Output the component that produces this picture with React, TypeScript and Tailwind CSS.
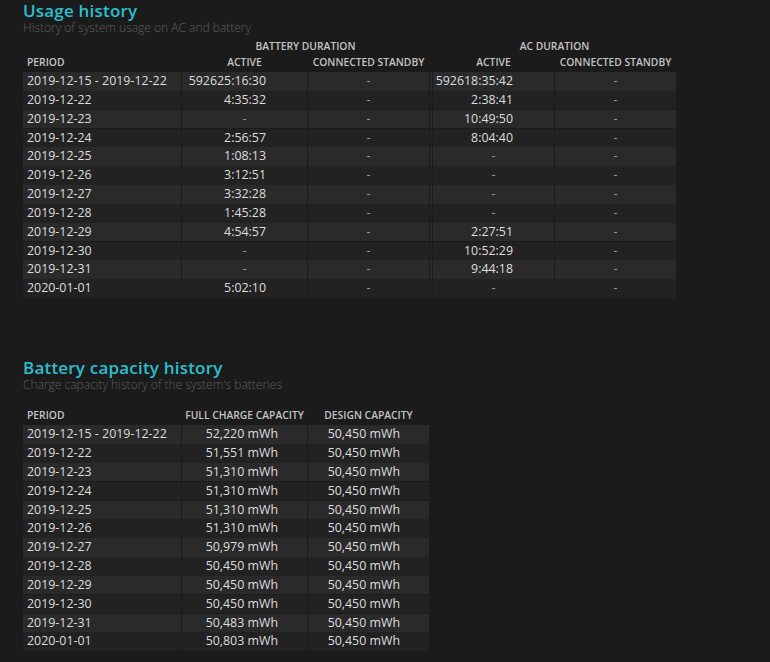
import React from 'react';

type Cell = string;

const usageRows: Cell[][] = [
  ['2019-12-15 - 2019-12-22', '592625:16:30', '-', '592618:35:42', '-'],
  ['2019-12-22', '4:35:32', '-', '2:38:41', '-'],
  ['2019-12-23', '-', '-', '10:49:50', '-'],
  ['2019-12-24', '2:56:57', '-', '8:04:40', '-'],
  ['2019-12-25', '1:08:13', '-', '-', '-'],
  ['2019-12-26', '3:12:51', '-', '-', '-'],
  ['2019-12-27', '3:32:28', '-', '-', '-'],
  ['2019-12-28', '1:45:28', '-', '-', '-'],
  ['2019-12-29', '4:54:57', '-', '2:27:51', '-'],
  ['2019-12-30', '-', '-', '10:52:29', '-'],
  ['2019-12-31', '-', '-', '9:44:18', '-'],
  ['2020-01-01', '5:02:10', '-', '-', '-'],
];

const capacityRows: Cell[][] = [
  ['2019-12-15 - 2019-12-22', '52,220 mWh', '50,450 mWh'],
  ['2019-12-22', '51,551 mWh', '50,450 mWh'],
  ['2019-12-23', '51,310 mWh', '50,450 mWh'],
  ['2019-12-24', '51,310 mWh', '50,450 mWh'],
  ['2019-12-25', '51,310 mWh', '50,450 mWh'],
  ['2019-12-26', '51,310 mWh', '50,450 mWh'],
  ['2019-12-27', '50,979 mWh', '50,450 mWh'],
  ['2019-12-28', '50,450 mWh', '50,450 mWh'],
  ['2019-12-29', '50,450 mWh', '50,450 mWh'],
  ['2019-12-30', '50,450 mWh', '50,450 mWh'],
  ['2019-12-31', '50,483 mWh', '50,450 mWh'],
  ['2020-01-01', '50,803 mWh', '50,450 mWh'],
];

// right aligned durations, centered dashes
function Value({ v, pad, bg }: { v: string; pad: 'hms' | 'mw'; bg: string }) {
  if (v === '-') {
    return <div className={`${bg} flex items-center justify-center text-[#9a9a9a]`}>-</div>;
  }
  return (
    <div className={`${bg} flex items-center justify-end ${pad === 'hms' ? 'pr-[41px]' : 'pr-[29px]'}`}>
      {v}
    </div>
  );
}

function SectionTitle({ title, sub }: { title: string; sub: string }) {
  return (
    <div>
      <h1 className="text-[17px] leading-[20px] font-semibold text-[#2bbfcf] tracking-[0.2px]">{title}</h1>
      <p className="text-[12px] leading-[13px] font-light text-[#5e5e5e]">{sub}</p>
    </div>
  );
}

export default function App() {
  return (
    <div
      className="min-h-screen bg-[#1b1b1b] pl-[23px] pt-px text-[#dedede]"
      style={{ fontFamily: '"Open Sans", "Noto Sans", sans-serif' }}
    >
      {/* Usage history */}
      <SectionTitle title="Usage history" sub="History of system usage on AC and battery" />

      <div className="mt-[5px] w-[653px] text-[10.3px] font-semibold text-[#c4c4c4]">
        <div className="grid grid-cols-[158px_125px_121px_2px_121px_121px] gap-x-px h-[16px] items-center">
          <div />
          <div className="col-span-2 text-center">BATTERY DURATION</div>
          <div />
          <div className="col-span-2 text-center">AC DURATION</div>
        </div>
        <div className="grid grid-cols-[158px_125px_121px_2px_121px_121px] gap-x-px h-[16px] items-center">
          <div className="pl-[4px]">PERIOD</div>
          <div className="text-center">ACTIVE</div>
          <div className="text-center">CONNECTED STANDBY</div>
          <div />
          <div className="text-center">ACTIVE</div>
          <div className="text-center">CONNECTED STANDBY</div>
        </div>
      </div>

      <div className="mt-[1px] flex flex-col gap-y-px w-[653px] text-[12.4px]">
        {usageRows.map((r, i) => {
          const bg = i % 2 === 0 ? 'bg-[#2a2a2a]' : 'bg-[#222222]';
          return (
            <div key={i} className="grid grid-cols-[158px_125px_121px_2px_121px_121px] gap-x-px h-[17.85px]">
              <div className={`${bg} flex items-center pl-[4px]`}>{r[0]}</div>
              <Value v={r[1]} pad="hms" bg={bg} />
              <Value v={r[2]} pad="hms" bg={bg} />
              <div className={bg} />
              <Value v={r[3]} pad="hms" bg={bg} />
              <Value v={r[4]} pad="hms" bg={bg} />
            </div>
          );
        })}
      </div>

      {/* Battery capacity history */}
      <div className="mt-[61px]">
        <SectionTitle title="Battery capacity history" sub="Charge capacity history of the system's batteries" />
      </div>

      <div className="mt-[17px] grid grid-cols-[158px_125px_121px] gap-x-px h-[16px] items-center w-[406px] text-[10.3px] font-semibold text-[#c4c4c4]">
        <div className="pl-[4px]">PERIOD</div>
        <div className="text-center">FULL CHARGE CAPACITY</div>
        <div className="text-center">DESIGN CAPACITY</div>
      </div>

      <div className="mt-[1px] flex flex-col gap-y-px w-[406px] text-[12.4px]">
        {capacityRows.map((r, i) => {
          const bg = i % 2 === 0 ? 'bg-[#2a2a2a]' : 'bg-[#222222]';
          return (
            <div key={i} className="grid grid-cols-[158px_125px_121px] gap-x-px h-[17.85px]">
              <div className={`${bg} flex items-center pl-[4px]`}>{r[0]}</div>
              <Value v={r[1]} pad="mw" bg={bg} />
              <Value v={r[2]} pad="mw" bg={bg} />
            </div>
          );
        })}
      </div>
    </div>
  );
}
